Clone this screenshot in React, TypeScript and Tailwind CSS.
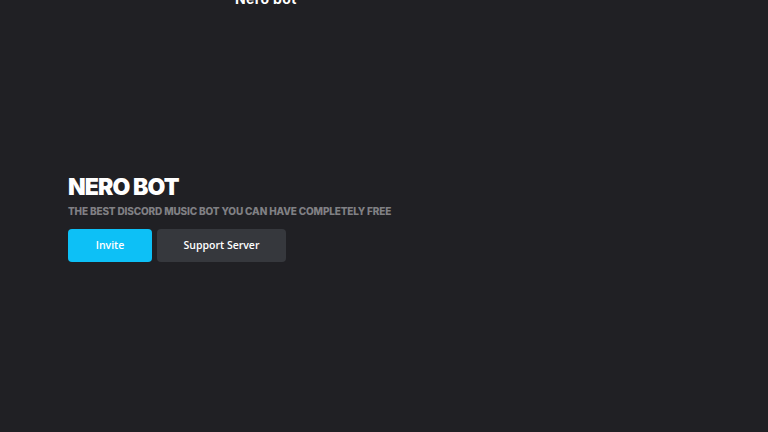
import React from 'react';

const App = () => {
  return (
    <div className="min-h-screen h-[432px] w-full bg-[#202024] overflow-hidden flex flex-col" style={{ fontFamily: 'Inter, "Noto Sans", sans-serif' }}>
      <header className="h-0 flex">
        <span className="ml-[235px] -mt-[8px] text-[14px] font-bold text-white leading-[14px] tracking-wide">Nero bot</span>
      </header>

      <main className="flex-1 flex flex-col justify-center px-[68px] pt-[4px]">
        <h1 className="text-[23px] leading-[26px] font-black text-white tracking-[-0.9px]">NERO BOT</h1>
        <p className="mt-[5px] text-[10px] leading-[13px] font-extrabold text-[#808084] tracking-[-0.15px]">
          THE BEST DISCORD MUSIC BOT YOU CAN HAVE COMPLETELY FREE
        </p>
        <div className="mt-[11px] flex gap-[5px]" style={{ fontFamily: '"Open Sans", "Noto Sans", sans-serif' }}>
          <button className="w-[84px] h-[33px] rounded-[4px] bg-[#0dc0f6] text-white text-[10.5px] font-semibold">
            Invite
          </button>
          <button className="w-[129px] h-[33px] rounded-[4px] bg-[#36383d] text-white text-[10.5px] font-semibold">
            Support Server
          </button>
        </div>
      </main>
    </div>
  );
};

export default App;
